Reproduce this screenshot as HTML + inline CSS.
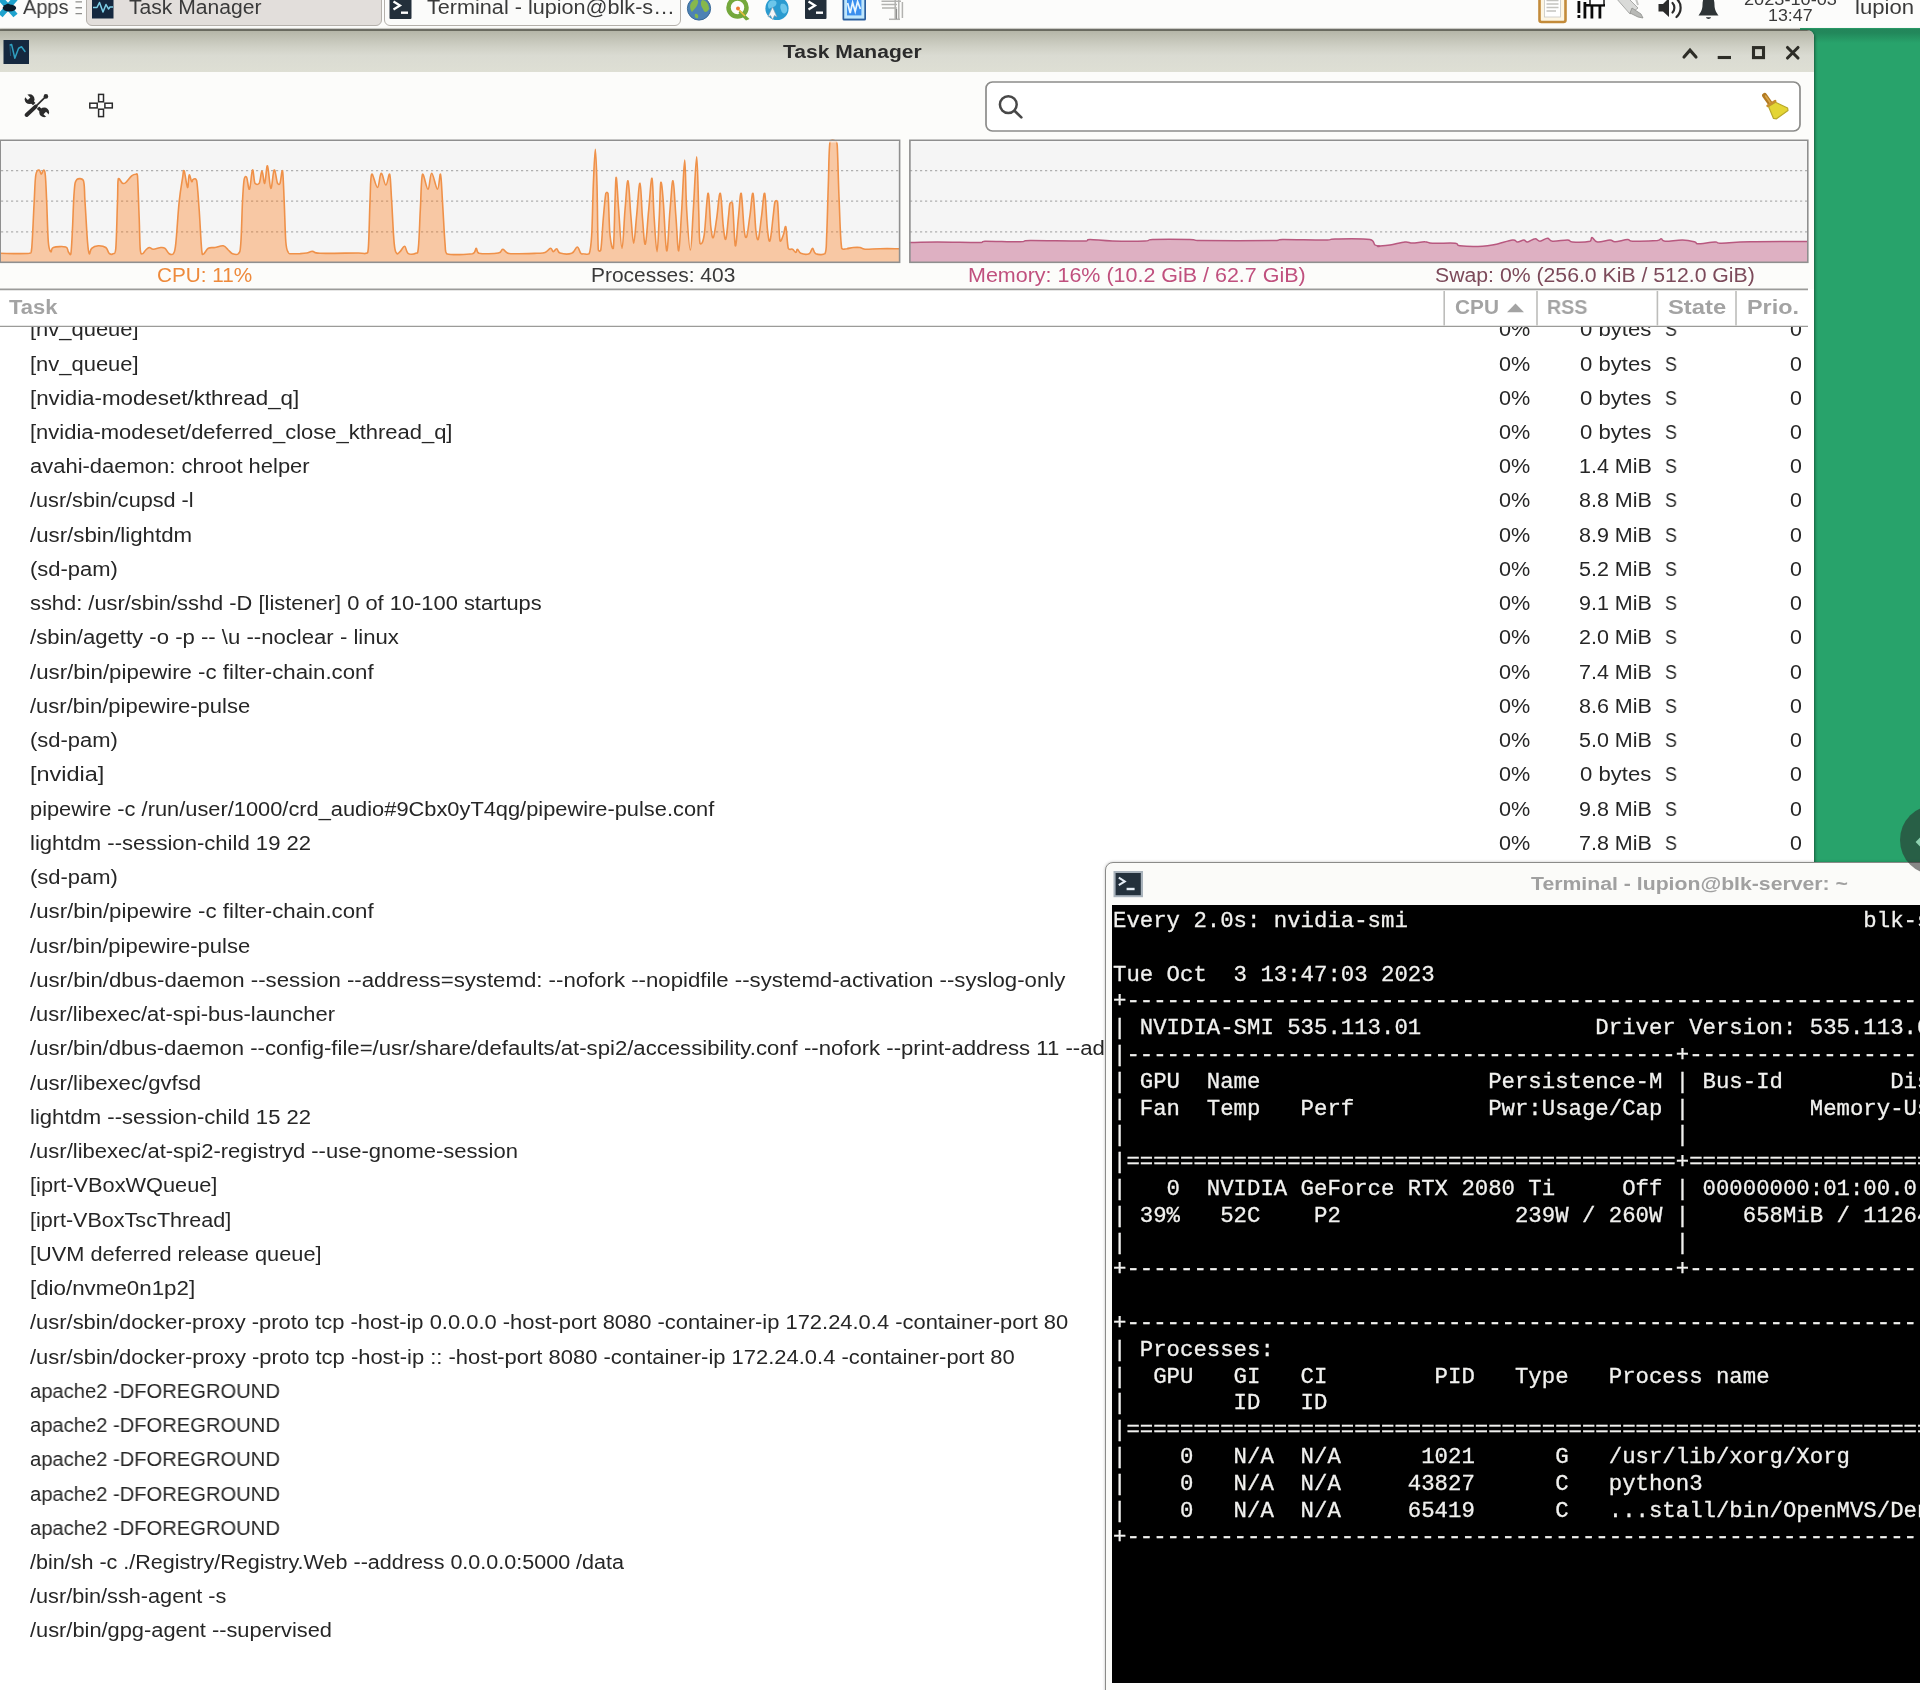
<!DOCTYPE html>
<html><head><meta charset="utf-8"><title>Task Manager</title>
<style>
html,body{margin:0;padding:0}
body{width:1920px;height:1690px;overflow:hidden;position:relative;background:#28a36b;font-family:"Liberation Sans",sans-serif;}
.abs{position:absolute}
.t{position:absolute;white-space:pre;will-change:transform;line-height:1.329em;transform-origin:0 0;font-family:"Liberation Sans",sans-serif}
#panel{left:0;top:0;width:1920px;height:30px;background:linear-gradient(#fcfcfb 0,#fcfcfb 27.4px,#c9c9c3 28.6px,#6b6b63 29.6px,#5e5e57 30px);overflow:hidden}
.tb{position:absolute;top:-6px;height:32px;border:1px solid #b4b0ab;border-radius:0 0 6px 6px;box-sizing:border-box}
#win{left:0;top:30px;width:1814px;height:1660px;background:#fff;overflow:hidden;border-radius:0 7px 0 0;box-shadow:1px 1px 3px rgba(0,0,0,.45)}
#titlebar{left:0;top:0;width:1814px;height:42px;background:linear-gradient(#b5b6a8 0,#bfc0b3 14%,#cfd0c5 38%,#dadbd2 60%,#dedfd4 100%);border-top:1.5px solid #696a5f;box-sizing:border-box}
#toolbar{left:0;top:42px;width:1814px;height:217px;background:#fcfcfa}
#search{left:985px;top:81px;width:816px;height:51px}
.graph{position:absolute;top:140px;height:122.5px;box-sizing:border-box;background:#f5f5f5}
#hdr{left:0;top:289px;width:1808px;height:38px;background:#fff}
.cs{position:absolute;top:291px;width:1.5px;height:34px;background:#c6c6c4}
#list{left:0;top:327px;width:1808px;height:1363px;overflow:hidden;background:#fff}
#term{left:1105px;top:862px;width:1170px;height:840px;background:#fbfbf9;border:1.6px solid #8b8b89;border-radius:8px 8px 0 0;box-sizing:border-box;overflow:hidden;box-shadow:0 0 3px rgba(0,0,0,.25)}
#tscreen{left:1112px;top:905px;width:900px;height:778px;background:#000;overflow:hidden}
#tscreen pre{will-change:transform;position:absolute;left:1px;top:3px;margin:0;font-family:"Liberation Mono",monospace;font-size:22.33px;line-height:26.8px;color:#f1f1ef;letter-spacing:0;-webkit-text-stroke:0.3px #f1f1ef}
</style></head><body>

<!-- ===== top panel ===== -->
<div id="panel" class="abs">
  <div class="tb" style="left:86px;width:296px;background:#e2dedb"></div>
  <div class="tb" style="left:384px;width:297px;background:#fbfbfa"></div>
  <svg class="abs" style="left:0;top:0" width="1920" height="30" viewBox="0 0 1920 30">
  <!-- xfce apps icon (blue X with dark mouse) -->
  <g>
    <path d="M0.5,-1.5 L15.5,15.5 M15.5,-1.5 L0.5,15.5" stroke="#1fa2cd" stroke-width="5.6" fill="none"/>
    <ellipse cx="9.4" cy="8" rx="6.8" ry="3.5" fill="#0c1b2b"/>
    <path d="M3,6 L8,3.5 L12,6 Z" fill="#0c1b2b"/>
  </g>
  <!-- handle -->
  <path d="M75.5,1.9H82M75.5,7.7H82M75.5,13.6H82" stroke="#8e8e8c" stroke-width="1.4"/>
  <!-- task manager icon in button -->
  <rect x="92" y="-5" width="21.5" height="23.5" fill="#15283f"/>
  <path d="M93,7.5 L97,7.5 L99.5,2.5 L103,12 L106,4.5 L108.5,9 L110,7 L113,7" fill="none" stroke="#7fd0e8" stroke-width="1.5" stroke-linejoin="round"/>
  <!-- terminal icon in button -->
  <rect x="389.5" y="-5" width="22" height="24" rx="1" fill="#232f3b"/>
  <path d="M393.5,1.5 L400,5.5 L393.5,9.5" fill="none" stroke="#fff" stroke-width="2.2"/>
  <rect x="401" y="11.5" width="7" height="2.4" fill="#fff"/>
  <!-- earth globe -->
  <circle cx="699" cy="8.5" r="11.6" fill="#4d82b4"/>
  <path d="M692,2 C695,-2 699,-1 698,3 C697,7 694,9 692,12 C690,10 689,5 692,2 Z M702,0 C706,0 709,4 709,9 C707,13 704,13 703,9 C701,6 700,3 702,0 Z M695,14 C697,13 699,15 698,18 C696,19 694,17 695,14 Z" fill="#86b84c"/>
  <circle cx="699" cy="8.5" r="11.6" fill="none" stroke="#3a6a98" stroke-width="1"/>
  <!-- qgis -->
  <circle cx="737.5" cy="7.5" r="9" fill="none" stroke="#74a83c" stroke-width="4.5"/>
  <path d="M740,10 L749.5,19 L746,20.5 L738.5,13 Z" fill="#74a83c"/>
  <circle cx="738" cy="8.5" r="2" fill="#ee7a30"/>
  <path d="M739,10 L745,16" stroke="#f0c040" stroke-width="1.5"/>
  <!-- globe blue with cursor -->
  <circle cx="777" cy="8.5" r="11.6" fill="#2a9bd0"/>
  <path d="M770,1 C774,-1 778,1 776,5 C774,8 771,7 769,9 C767,6 768,3 770,1 Z M781,4 C785,3 788,6 787,11 C785,15 782,14 781,10 C780,8 780,6 781,4 Z" fill="#6cc6ea"/>
  <path d="M772.5,7 L777,17 L774.5,15.5 L772.5,19.5 L770.5,15.5 L768,17 Z" fill="#f4f6f8" stroke="#8aa0b0" stroke-width=".6"/>
  <!-- terminal launcher -->
  <rect x="805" y="-5" width="21.5" height="24" rx="1" fill="#232f3b"/>
  <path d="M808.5,1.5 L815,5.5 L808.5,9.5" fill="none" stroke="#fff" stroke-width="2.2"/>
  <rect x="816" y="11.5" width="7" height="2.4" fill="#fff"/>
  <!-- blue monitor -->
  <rect x="842.5" y="-5" width="23.5" height="25.4" rx="1.5" fill="#2b5f9e"/>
  <rect x="844.2" y="-4" width="20.1" height="22.6" fill="#bfe6fc"/>
  <rect x="847" y="-2" width="14.4" height="17.4" fill="#3b8fee"/>
  <path d="M847.6,3 L850.2,13 L852.6,2.5 L855.2,11.5 L857.6,1.5 L860.4,9" fill="none" stroke="#e8f6ff" stroke-width="1.7"/>
  <!-- grey chip thing -->
  <g stroke="#b2b2b0" stroke-width="1.5" fill="none">
    <path d="M881.5,1.2H901M881.5,4.6H897M882,8H897"/>
    <path d="M895.2,-2V19.6M898.8,-3V20M902.4,2V18"/>
    <path d="M889,19.3H900"/>
  </g>
  <path d="M896.5,9V19" stroke="#8e8e8c" stroke-width="1.2"/>
  <!-- clipboard -->
  <rect x="1539.5" y="-8" width="26" height="30" rx="2" fill="#fdf6e4" stroke="#c38b3a" stroke-width="2.6"/>
  <rect x="1544.5" y="-4" width="16" height="21" fill="#fff" stroke="#c8c8c4" stroke-width=".8"/>
  <path d="M1546.5,0.5H1558.5M1546.5,4H1558.5M1546.5,7.5H1558.5M1546.5,11H1556" stroke="#c4c4c0" stroke-width="1.3"/>
  <!-- !|pi thing -->
  <g fill="#0a0a0a">
    <rect x="1577.5" y="1" width="2.8" height="12"/><rect x="1577.5" y="15" width="2.8" height="3"/>
    <rect x="1583.5" y="2" width="2.8" height="16.5"/>
    <rect x="1590.5" y="5" width="2.8" height="13.5"/><rect x="1598.5" y="5" width="2.8" height="13.5"/>
    <rect x="1586" y="4" width="19" height="2.6"/>
  </g>
  <rect x="1590" y="-6" width="14" height="11" fill="#fff" stroke="#0a0a0a" stroke-width="1.4"/>
  <!-- network plug -->
  <g>
    <path d="M1616,-2 L1626,-4 L1638,8 L1630,14 Z" fill="#d9dad8" stroke="#a9aaa8" stroke-width="1"/>
    <path d="M1632,8 L1641,14 L1643,18 L1638,17 L1630,13 Z" fill="#b8b9b6" stroke="#8e8f8c" stroke-width=".8"/>
    <path d="M1628,-3 L1636,-1 L1638,5" fill="none" stroke="#c4c5c2" stroke-width="2"/>
  </g>
  <!-- speaker -->
  <path d="M1658.5,4 L1663,4 L1669,-2 L1669,17 L1663,11.5 L1658.5,11.5 Z" fill="#2b2b2b"/>
  <path d="M1672.5,3 C1675,5.5 1675,10 1672.5,12.5" fill="none" stroke="#2b2b2b" stroke-width="2.2" stroke-linecap="round"/>
  <path d="M1676.5,-1.5 C1682,3.5 1682,12 1676.5,17" fill="none" stroke="#2b2b2b" stroke-width="2.2" stroke-linecap="round"/>
  <!-- bell -->
  <path d="M1708.5,-6 C1704,-5 1702.5,0 1702.5,5 C1702.5,10 1700.5,12.5 1698.5,15.5 L1718.5,15.5 C1716.5,12.5 1714.5,10 1714.5,5 C1714.5,0 1713,-5 1708.5,-6 Z" fill="#2e3436"/>
  <path d="M1706,17.3 L1711,17.3 C1710.5,19.4 1706.5,19.4 1706,17.3 Z" fill="#2e3436"/>
</svg>

</div>

<div class="abs" style="left:1800px;top:28.3px;width:120px;height:15px;background:linear-gradient(#28a36b 0,#23865a 1.2px,#22885b 5px,#28a36b 15px)"></div>
<!-- ===== task manager window ===== -->
<div id="win" class="abs">
  <div id="titlebar" class="abs"></div>
  <div id="toolbar" class="abs"></div>
</div>
<svg id="search" class="abs" width="816" height="51" viewBox="985 81 816 51"><rect x="986" y="82" width="814" height="49" rx="6.5" fill="#fff" stroke="#8c8c8a" stroke-width="1.7"/></svg>
<div class="graph" style="left:0;width:900px"></div>
<div class="graph" style="left:909px;width:899px"></div>
<svg class="abs" style="left:0;top:0" width="1920" height="300" viewBox="0 0 1920 300">
  <g stroke="#b0b0b0" stroke-width="1.3" stroke-dasharray="2.2 2.8" fill="none">
    <path d="M1,170.6H899M1,201.2H899M1,231.9H899"/>
    <path d="M910,170.6H1807M910,201.2H1807M910,231.9H1807"/>
  </g>
  <path d="M0.0,253.3 C5.3,253.3 23.4,254.2 29.2,253.3 C31.7,252.4 30.8,254.8 31.7,248.3 C32.6,238.9 33.4,215.1 34.2,201.7 C34.9,188.2 34.9,180.8 35.8,175.0 C36.8,169.2 38.2,170.2 39.2,170.0 C40.2,169.8 40.5,174.2 41.3,174.2 C42.2,174.2 42.9,169.8 43.7,170.0 C44.4,170.2 44.8,169.2 45.3,175.0 C45.9,180.8 46.1,189.4 46.7,201.7 C47.2,213.9 47.6,232.5 48.3,241.7 C49.1,250.8 49.9,250.6 50.8,251.7 C51.8,252.7 50.8,248.4 53.3,247.5 C56.1,246.6 63.1,246.2 65.8,247.0 C68.3,247.8 67.4,250.4 68.3,251.7 C69.2,253.0 70.1,255.7 70.8,254.2 C71.6,249.9 71.9,239.8 72.5,228.3 C73.1,216.9 73.4,200.6 74.2,191.7 C74.9,182.7 75.0,181.7 76.7,179.7 C78.3,178.2 81.8,178.2 83.3,180.3 C84.9,184.4 84.2,190.4 85.0,201.7 C85.8,212.9 86.7,232.1 87.5,241.7 C88.3,251.2 88.4,252.4 89.2,253.7 C89.9,254.9 90.0,249.8 91.7,248.3 C93.3,246.9 95.7,246.0 98.3,245.8 C100.9,245.7 103.8,246.1 105.8,247.5 C107.8,248.9 107.8,252.2 109.2,253.3 C110.5,254.5 112.1,254.6 113.3,253.7 C114.6,252.8 115.1,255.2 115.8,248.3 C116.6,238.8 117.0,214.4 117.5,201.7 C118.0,188.9 117.5,182.0 118.3,178.7 C119.2,177.2 121.1,182.6 122.5,183.3 C123.9,184.0 124.2,183.9 125.8,182.5 C127.5,181.1 129.8,177.4 131.7,175.8 C133.5,174.3 134.8,174.2 135.8,174.2 C136.9,174.2 136.9,172.7 137.5,175.8 C138.1,183.9 138.6,204.7 139.2,218.3 C139.7,231.9 139.7,243.5 140.3,250.0 C140.9,255.2 141.5,253.7 142.5,253.7 C143.5,253.7 144.6,251.1 145.8,250.0 C147.1,248.9 147.8,247.7 149.2,247.5 C150.5,247.3 151.2,249.2 153.3,249.2 C155.5,249.2 158.7,247.7 160.8,247.5 C163.0,247.3 163.5,247.2 165.0,248.3 C166.5,249.5 167.6,252.7 169.2,253.7 C170.7,254.6 172.1,255.2 173.3,253.7 C174.6,251.8 174.8,252.9 175.8,243.3 C176.9,233.8 177.9,213.6 179.2,201.7 C180.4,189.8 181.6,184.0 182.5,178.3 C183.4,172.7 183.2,169.3 184.2,170.8 C185.1,172.5 186.6,186.7 187.5,187.5 C188.4,188.3 188.4,176.1 189.2,175.0 C189.9,173.9 190.9,180.9 191.7,181.7 C192.4,182.4 192.4,179.3 193.3,179.2 C194.2,179.0 195.6,177.7 196.7,180.8 C197.7,186.5 198.2,197.3 199.2,210.0 C200.1,222.7 200.9,241.9 201.7,250.0 C202.4,255.7 202.1,254.5 203.3,254.2 C204.6,253.9 206.2,249.6 208.3,248.3 C210.5,247.1 212.2,248.0 215.0,247.5 C217.8,247.0 220.9,245.4 223.3,245.8 C225.8,246.3 226.7,248.6 228.3,250.0 C230.0,251.4 230.7,253.0 232.5,253.7 C234.3,254.3 236.8,255.2 238.3,253.7 C239.9,251.8 240.1,252.9 240.8,243.3 C241.6,233.8 241.9,213.4 242.5,201.7 C243.1,189.9 243.4,183.6 244.2,179.2 C244.9,176.0 245.7,176.0 246.7,177.5 C247.6,179.3 248.4,190.5 249.5,189.2 C250.6,187.8 251.5,171.1 252.5,170.0 C253.5,168.9 253.8,180.9 255.0,183.3 C256.2,184.8 257.9,184.8 259.2,183.3 C260.5,181.0 261.0,170.8 262.0,170.8 C263.0,170.8 263.7,184.2 264.7,183.3 C265.7,182.4 266.4,164.9 267.5,165.8 C268.6,166.8 269.6,187.6 270.8,188.3 C272.1,189.1 272.9,170.9 274.2,170.0 C275.4,169.1 276.4,180.9 277.5,183.3 C278.6,184.8 279.1,184.8 280.0,183.3 C280.9,181.0 281.7,169.3 282.5,170.8 C283.3,174.2 283.6,188.7 284.2,201.7 C284.8,214.7 285.1,232.3 285.8,241.7 C286.6,251.0 287.3,250.3 288.3,252.5 C289.4,254.7 289.5,253.5 291.7,253.7 C293.8,253.9 297.2,253.8 300.0,253.7 C302.8,253.5 304.4,253.4 306.7,253.0 C309.0,252.6 310.1,251.3 312.5,251.3 C314.9,251.4 312.5,253.0 320.0,253.3 C328.4,253.6 349.9,253.0 358.3,253.0 C365.8,253.0 364.0,254.2 365.8,253.3 C367.7,252.5 367.6,254.8 368.3,248.3 C369.1,238.9 369.4,215.3 370.0,201.7 C370.6,188.1 370.3,176.8 371.7,174.2 C373.0,172.7 375.8,187.7 377.5,187.5 C379.2,187.3 379.6,173.8 381.2,173.3 C382.7,172.9 384.3,184.8 385.8,185.0 C387.4,185.2 388.6,172.7 389.7,174.2 C390.7,177.2 390.8,189.0 391.7,201.7 C392.5,214.3 393.2,233.9 394.2,243.3 C395.1,252.8 395.6,251.8 396.7,253.3 C397.7,254.8 398.5,253.0 400.0,251.7 C401.5,250.4 403.2,246.0 404.7,246.3 C406.1,246.6 406.0,252.0 408.0,253.3 C410.0,254.6 413.9,254.2 415.8,253.3 C417.7,252.4 417.5,254.8 418.3,248.3 C419.2,240.4 419.6,223.6 420.3,210.0 C421.1,196.4 421.1,178.0 422.5,174.2 C423.9,172.7 426.3,189.3 428.0,189.2 C429.7,189.0 429.9,173.3 431.7,173.3 C433.4,173.3 435.9,189.0 437.5,189.2 C439.1,189.3 439.6,172.7 440.5,174.2 C441.4,176.5 441.7,189.0 442.5,201.7 C443.3,214.3 444.2,233.8 445.0,243.3 C445.8,252.9 445.0,251.8 446.7,253.7 C451.7,255.2 467.1,254.6 472.5,253.7 C476.2,252.7 474.9,248.4 476.2,248.3 C477.4,248.3 476.2,252.5 479.2,253.3 C483.2,254.2 494.1,253.8 498.3,253.0 C502.5,252.2 501.1,249.4 502.5,249.2 C503.9,248.9 504.3,250.8 505.8,251.7 C507.4,252.5 505.8,253.4 510.8,253.7 C516.5,254.0 530.4,253.5 536.7,253.3 C542.9,253.1 542.5,253.4 545.0,252.5 C547.5,251.6 549.0,248.5 550.5,248.3 C552.0,248.2 552.2,251.6 553.3,251.7 C554.5,251.7 555.4,248.4 556.7,248.7 C557.9,248.9 557.2,252.1 560.0,253.0 C562.8,253.9 568.5,254.4 571.7,253.3 C574.8,252.2 575.5,247.0 577.2,247.0 C578.8,247.0 579.7,252.1 580.8,253.3 C582.0,254.6 581.8,253.6 583.3,253.7 C584.9,253.7 587.6,255.2 589.2,253.7 C590.7,250.2 590.9,247.6 591.7,235.0 C592.4,222.4 592.7,200.7 593.3,185.0 C594.0,169.3 594.7,149.2 595.3,149.2 C596.0,149.2 596.5,166.5 597.0,185.0 C597.5,203.5 597.6,238.1 598.3,250.0 C599.0,251.5 599.9,251.5 600.8,250.0 C601.8,244.2 602.4,228.7 603.3,218.3 C604.2,207.9 605.0,197.9 605.8,193.3 C606.7,191.8 607.2,191.8 608.0,193.3 C608.8,201.0 609.0,224.9 610.0,235.0 C611.0,245.1 612.4,249.8 613.3,248.3 C614.2,242.2 614.5,214.7 615.0,201.7 C615.5,188.7 615.7,176.0 616.3,177.5 C617.0,179.0 617.6,197.0 618.7,210.0 C619.7,223.0 620.8,248.3 622.0,248.3 C623.2,248.3 623.9,222.4 625.0,210.0 C626.1,197.6 626.9,179.9 628.0,180.8 C629.1,181.8 629.8,203.5 630.8,215.0 C631.9,226.5 632.6,243.3 633.7,243.3 C634.7,243.3 635.5,226.0 636.7,215.0 C637.8,204.0 638.9,182.7 640.0,183.3 C641.1,183.9 641.5,207.2 642.5,218.3 C643.5,229.5 644.2,245.7 645.3,244.2 C646.5,242.6 647.4,222.1 648.7,210.0 C649.9,197.9 651.0,176.8 652.0,178.3 C653.0,179.9 653.2,204.9 654.2,218.3 C655.1,231.8 656.1,251.7 657.0,251.7 C657.9,251.7 658.5,231.0 659.2,218.3 C659.9,205.7 660.1,185.6 660.8,182.5 C661.6,181.0 662.3,189.1 663.3,201.7 C664.4,214.2 665.4,249.3 666.7,250.8 C667.9,252.3 668.8,222.8 670.0,210.0 C671.2,197.2 671.9,179.9 673.0,180.8 C674.1,181.8 674.8,202.2 675.8,215.0 C676.9,227.8 677.6,251.7 678.7,250.8 C679.7,249.9 680.6,226.7 681.7,210.0 C682.8,193.3 683.8,160.0 684.7,160.0 C685.6,160.0 685.6,193.5 686.7,210.0 C687.7,226.5 689.1,250.0 690.3,250.0 C691.6,250.0 692.2,227.1 693.3,210.0 C694.5,192.9 695.7,156.7 696.7,156.7 C697.6,156.7 698.1,194.1 698.7,210.0 C699.3,225.9 699.0,238.7 700.0,243.3 C701.0,244.8 702.7,244.2 704.2,235.0 C705.6,225.8 706.8,194.9 708.0,193.3 C709.2,191.8 709.9,218.6 710.8,226.7 C711.8,234.8 712.3,239.0 713.3,237.5 C714.4,236.0 715.4,226.4 716.7,218.3 C717.9,210.2 719.1,191.8 720.3,193.3 C721.6,194.9 722.3,218.3 723.3,226.7 C724.3,235.1 724.9,240.7 725.8,239.2 C726.8,237.6 727.6,224.9 728.3,218.3 C729.1,211.8 729.2,206.1 730.0,203.3 C730.8,201.8 731.5,201.8 732.5,203.3 C733.5,211.1 734.3,243.1 735.3,245.8 C736.4,247.3 737.3,228.0 738.3,218.3 C739.4,208.7 740.1,191.8 741.2,193.3 C742.2,195.5 743.2,222.1 744.2,230.0 C745.2,237.9 745.6,238.2 746.7,236.7 C747.7,233.9 748.8,222.9 750.0,215.0 C751.2,207.1 751.9,191.8 753.0,193.3 C754.1,196.1 754.9,221.6 755.8,230.0 C756.8,238.4 757.3,240.7 758.3,239.2 C759.4,236.4 760.5,223.4 761.7,215.0 C762.8,206.6 763.6,191.8 764.7,193.3 C765.7,196.1 766.5,221.3 767.5,230.0 C768.5,238.7 768.9,242.3 770.0,240.8 C771.1,238.1 772.4,222.2 773.3,215.0 C774.2,207.8 774.2,204.1 775.0,201.7 C775.8,200.2 776.6,200.2 777.5,201.7 C778.4,208.8 778.9,234.7 780.0,240.8 C781.1,242.3 782.3,237.6 783.3,235.0 C784.4,232.4 784.9,225.2 785.8,226.7 C786.8,229.1 787.1,244.2 788.3,248.3 C789.6,250.7 791.1,248.4 792.5,249.2 C793.9,249.9 794.9,252.5 795.8,252.5 C796.8,252.5 796.6,249.0 797.5,249.2 C798.4,249.3 798.7,252.5 800.8,253.3 C803.0,254.2 807.0,254.6 809.2,253.7 C811.3,252.8 811.3,248.3 812.5,248.3 C813.7,248.3 813.5,252.7 815.8,253.7 C818.1,254.6 823.0,255.2 825.0,253.7 C826.7,250.2 826.1,247.6 826.7,235.0 C827.3,222.4 827.7,202.1 828.3,185.0 C828.9,167.9 828.8,149.8 830.0,141.7 C831.2,139.3 833.7,140.2 835.0,140.8 C836.3,141.4 836.4,139.3 837.2,145.0 C837.9,156.2 838.3,182.7 839.2,201.7 C840.0,220.6 840.3,239.7 841.7,248.3 C843.0,250.2 844.5,248.8 846.7,248.7 C848.8,248.5 850.9,247.7 853.3,247.5 C855.8,247.3 857.9,247.2 860.0,247.5 C862.1,247.8 861.3,249.0 865.0,249.2 C868.7,249.4 873.7,248.8 880.0,248.7 C886.3,248.6 895.7,248.7 899.2,248.7 L899.2,262 L0.0,262 Z" fill="rgba(255,110,0,0.33)" stroke="none"/>
  <path d="M0.0,253.3 C5.3,253.3 23.4,254.2 29.2,253.3 C31.7,252.4 30.8,254.8 31.7,248.3 C32.6,238.9 33.4,215.1 34.2,201.7 C34.9,188.2 34.9,180.8 35.8,175.0 C36.8,169.2 38.2,170.2 39.2,170.0 C40.2,169.8 40.5,174.2 41.3,174.2 C42.2,174.2 42.9,169.8 43.7,170.0 C44.4,170.2 44.8,169.2 45.3,175.0 C45.9,180.8 46.1,189.4 46.7,201.7 C47.2,213.9 47.6,232.5 48.3,241.7 C49.1,250.8 49.9,250.6 50.8,251.7 C51.8,252.7 50.8,248.4 53.3,247.5 C56.1,246.6 63.1,246.2 65.8,247.0 C68.3,247.8 67.4,250.4 68.3,251.7 C69.2,253.0 70.1,255.7 70.8,254.2 C71.6,249.9 71.9,239.8 72.5,228.3 C73.1,216.9 73.4,200.6 74.2,191.7 C74.9,182.7 75.0,181.7 76.7,179.7 C78.3,178.2 81.8,178.2 83.3,180.3 C84.9,184.4 84.2,190.4 85.0,201.7 C85.8,212.9 86.7,232.1 87.5,241.7 C88.3,251.2 88.4,252.4 89.2,253.7 C89.9,254.9 90.0,249.8 91.7,248.3 C93.3,246.9 95.7,246.0 98.3,245.8 C100.9,245.7 103.8,246.1 105.8,247.5 C107.8,248.9 107.8,252.2 109.2,253.3 C110.5,254.5 112.1,254.6 113.3,253.7 C114.6,252.8 115.1,255.2 115.8,248.3 C116.6,238.8 117.0,214.4 117.5,201.7 C118.0,188.9 117.5,182.0 118.3,178.7 C119.2,177.2 121.1,182.6 122.5,183.3 C123.9,184.0 124.2,183.9 125.8,182.5 C127.5,181.1 129.8,177.4 131.7,175.8 C133.5,174.3 134.8,174.2 135.8,174.2 C136.9,174.2 136.9,172.7 137.5,175.8 C138.1,183.9 138.6,204.7 139.2,218.3 C139.7,231.9 139.7,243.5 140.3,250.0 C140.9,255.2 141.5,253.7 142.5,253.7 C143.5,253.7 144.6,251.1 145.8,250.0 C147.1,248.9 147.8,247.7 149.2,247.5 C150.5,247.3 151.2,249.2 153.3,249.2 C155.5,249.2 158.7,247.7 160.8,247.5 C163.0,247.3 163.5,247.2 165.0,248.3 C166.5,249.5 167.6,252.7 169.2,253.7 C170.7,254.6 172.1,255.2 173.3,253.7 C174.6,251.8 174.8,252.9 175.8,243.3 C176.9,233.8 177.9,213.6 179.2,201.7 C180.4,189.8 181.6,184.0 182.5,178.3 C183.4,172.7 183.2,169.3 184.2,170.8 C185.1,172.5 186.6,186.7 187.5,187.5 C188.4,188.3 188.4,176.1 189.2,175.0 C189.9,173.9 190.9,180.9 191.7,181.7 C192.4,182.4 192.4,179.3 193.3,179.2 C194.2,179.0 195.6,177.7 196.7,180.8 C197.7,186.5 198.2,197.3 199.2,210.0 C200.1,222.7 200.9,241.9 201.7,250.0 C202.4,255.7 202.1,254.5 203.3,254.2 C204.6,253.9 206.2,249.6 208.3,248.3 C210.5,247.1 212.2,248.0 215.0,247.5 C217.8,247.0 220.9,245.4 223.3,245.8 C225.8,246.3 226.7,248.6 228.3,250.0 C230.0,251.4 230.7,253.0 232.5,253.7 C234.3,254.3 236.8,255.2 238.3,253.7 C239.9,251.8 240.1,252.9 240.8,243.3 C241.6,233.8 241.9,213.4 242.5,201.7 C243.1,189.9 243.4,183.6 244.2,179.2 C244.9,176.0 245.7,176.0 246.7,177.5 C247.6,179.3 248.4,190.5 249.5,189.2 C250.6,187.8 251.5,171.1 252.5,170.0 C253.5,168.9 253.8,180.9 255.0,183.3 C256.2,184.8 257.9,184.8 259.2,183.3 C260.5,181.0 261.0,170.8 262.0,170.8 C263.0,170.8 263.7,184.2 264.7,183.3 C265.7,182.4 266.4,164.9 267.5,165.8 C268.6,166.8 269.6,187.6 270.8,188.3 C272.1,189.1 272.9,170.9 274.2,170.0 C275.4,169.1 276.4,180.9 277.5,183.3 C278.6,184.8 279.1,184.8 280.0,183.3 C280.9,181.0 281.7,169.3 282.5,170.8 C283.3,174.2 283.6,188.7 284.2,201.7 C284.8,214.7 285.1,232.3 285.8,241.7 C286.6,251.0 287.3,250.3 288.3,252.5 C289.4,254.7 289.5,253.5 291.7,253.7 C293.8,253.9 297.2,253.8 300.0,253.7 C302.8,253.5 304.4,253.4 306.7,253.0 C309.0,252.6 310.1,251.3 312.5,251.3 C314.9,251.4 312.5,253.0 320.0,253.3 C328.4,253.6 349.9,253.0 358.3,253.0 C365.8,253.0 364.0,254.2 365.8,253.3 C367.7,252.5 367.6,254.8 368.3,248.3 C369.1,238.9 369.4,215.3 370.0,201.7 C370.6,188.1 370.3,176.8 371.7,174.2 C373.0,172.7 375.8,187.7 377.5,187.5 C379.2,187.3 379.6,173.8 381.2,173.3 C382.7,172.9 384.3,184.8 385.8,185.0 C387.4,185.2 388.6,172.7 389.7,174.2 C390.7,177.2 390.8,189.0 391.7,201.7 C392.5,214.3 393.2,233.9 394.2,243.3 C395.1,252.8 395.6,251.8 396.7,253.3 C397.7,254.8 398.5,253.0 400.0,251.7 C401.5,250.4 403.2,246.0 404.7,246.3 C406.1,246.6 406.0,252.0 408.0,253.3 C410.0,254.6 413.9,254.2 415.8,253.3 C417.7,252.4 417.5,254.8 418.3,248.3 C419.2,240.4 419.6,223.6 420.3,210.0 C421.1,196.4 421.1,178.0 422.5,174.2 C423.9,172.7 426.3,189.3 428.0,189.2 C429.7,189.0 429.9,173.3 431.7,173.3 C433.4,173.3 435.9,189.0 437.5,189.2 C439.1,189.3 439.6,172.7 440.5,174.2 C441.4,176.5 441.7,189.0 442.5,201.7 C443.3,214.3 444.2,233.8 445.0,243.3 C445.8,252.9 445.0,251.8 446.7,253.7 C451.7,255.2 467.1,254.6 472.5,253.7 C476.2,252.7 474.9,248.4 476.2,248.3 C477.4,248.3 476.2,252.5 479.2,253.3 C483.2,254.2 494.1,253.8 498.3,253.0 C502.5,252.2 501.1,249.4 502.5,249.2 C503.9,248.9 504.3,250.8 505.8,251.7 C507.4,252.5 505.8,253.4 510.8,253.7 C516.5,254.0 530.4,253.5 536.7,253.3 C542.9,253.1 542.5,253.4 545.0,252.5 C547.5,251.6 549.0,248.5 550.5,248.3 C552.0,248.2 552.2,251.6 553.3,251.7 C554.5,251.7 555.4,248.4 556.7,248.7 C557.9,248.9 557.2,252.1 560.0,253.0 C562.8,253.9 568.5,254.4 571.7,253.3 C574.8,252.2 575.5,247.0 577.2,247.0 C578.8,247.0 579.7,252.1 580.8,253.3 C582.0,254.6 581.8,253.6 583.3,253.7 C584.9,253.7 587.6,255.2 589.2,253.7 C590.7,250.2 590.9,247.6 591.7,235.0 C592.4,222.4 592.7,200.7 593.3,185.0 C594.0,169.3 594.7,149.2 595.3,149.2 C596.0,149.2 596.5,166.5 597.0,185.0 C597.5,203.5 597.6,238.1 598.3,250.0 C599.0,251.5 599.9,251.5 600.8,250.0 C601.8,244.2 602.4,228.7 603.3,218.3 C604.2,207.9 605.0,197.9 605.8,193.3 C606.7,191.8 607.2,191.8 608.0,193.3 C608.8,201.0 609.0,224.9 610.0,235.0 C611.0,245.1 612.4,249.8 613.3,248.3 C614.2,242.2 614.5,214.7 615.0,201.7 C615.5,188.7 615.7,176.0 616.3,177.5 C617.0,179.0 617.6,197.0 618.7,210.0 C619.7,223.0 620.8,248.3 622.0,248.3 C623.2,248.3 623.9,222.4 625.0,210.0 C626.1,197.6 626.9,179.9 628.0,180.8 C629.1,181.8 629.8,203.5 630.8,215.0 C631.9,226.5 632.6,243.3 633.7,243.3 C634.7,243.3 635.5,226.0 636.7,215.0 C637.8,204.0 638.9,182.7 640.0,183.3 C641.1,183.9 641.5,207.2 642.5,218.3 C643.5,229.5 644.2,245.7 645.3,244.2 C646.5,242.6 647.4,222.1 648.7,210.0 C649.9,197.9 651.0,176.8 652.0,178.3 C653.0,179.9 653.2,204.9 654.2,218.3 C655.1,231.8 656.1,251.7 657.0,251.7 C657.9,251.7 658.5,231.0 659.2,218.3 C659.9,205.7 660.1,185.6 660.8,182.5 C661.6,181.0 662.3,189.1 663.3,201.7 C664.4,214.2 665.4,249.3 666.7,250.8 C667.9,252.3 668.8,222.8 670.0,210.0 C671.2,197.2 671.9,179.9 673.0,180.8 C674.1,181.8 674.8,202.2 675.8,215.0 C676.9,227.8 677.6,251.7 678.7,250.8 C679.7,249.9 680.6,226.7 681.7,210.0 C682.8,193.3 683.8,160.0 684.7,160.0 C685.6,160.0 685.6,193.5 686.7,210.0 C687.7,226.5 689.1,250.0 690.3,250.0 C691.6,250.0 692.2,227.1 693.3,210.0 C694.5,192.9 695.7,156.7 696.7,156.7 C697.6,156.7 698.1,194.1 698.7,210.0 C699.3,225.9 699.0,238.7 700.0,243.3 C701.0,244.8 702.7,244.2 704.2,235.0 C705.6,225.8 706.8,194.9 708.0,193.3 C709.2,191.8 709.9,218.6 710.8,226.7 C711.8,234.8 712.3,239.0 713.3,237.5 C714.4,236.0 715.4,226.4 716.7,218.3 C717.9,210.2 719.1,191.8 720.3,193.3 C721.6,194.9 722.3,218.3 723.3,226.7 C724.3,235.1 724.9,240.7 725.8,239.2 C726.8,237.6 727.6,224.9 728.3,218.3 C729.1,211.8 729.2,206.1 730.0,203.3 C730.8,201.8 731.5,201.8 732.5,203.3 C733.5,211.1 734.3,243.1 735.3,245.8 C736.4,247.3 737.3,228.0 738.3,218.3 C739.4,208.7 740.1,191.8 741.2,193.3 C742.2,195.5 743.2,222.1 744.2,230.0 C745.2,237.9 745.6,238.2 746.7,236.7 C747.7,233.9 748.8,222.9 750.0,215.0 C751.2,207.1 751.9,191.8 753.0,193.3 C754.1,196.1 754.9,221.6 755.8,230.0 C756.8,238.4 757.3,240.7 758.3,239.2 C759.4,236.4 760.5,223.4 761.7,215.0 C762.8,206.6 763.6,191.8 764.7,193.3 C765.7,196.1 766.5,221.3 767.5,230.0 C768.5,238.7 768.9,242.3 770.0,240.8 C771.1,238.1 772.4,222.2 773.3,215.0 C774.2,207.8 774.2,204.1 775.0,201.7 C775.8,200.2 776.6,200.2 777.5,201.7 C778.4,208.8 778.9,234.7 780.0,240.8 C781.1,242.3 782.3,237.6 783.3,235.0 C784.4,232.4 784.9,225.2 785.8,226.7 C786.8,229.1 787.1,244.2 788.3,248.3 C789.6,250.7 791.1,248.4 792.5,249.2 C793.9,249.9 794.9,252.5 795.8,252.5 C796.8,252.5 796.6,249.0 797.5,249.2 C798.4,249.3 798.7,252.5 800.8,253.3 C803.0,254.2 807.0,254.6 809.2,253.7 C811.3,252.8 811.3,248.3 812.5,248.3 C813.7,248.3 813.5,252.7 815.8,253.7 C818.1,254.6 823.0,255.2 825.0,253.7 C826.7,250.2 826.1,247.6 826.7,235.0 C827.3,222.4 827.7,202.1 828.3,185.0 C828.9,167.9 828.8,149.8 830.0,141.7 C831.2,139.3 833.7,140.2 835.0,140.8 C836.3,141.4 836.4,139.3 837.2,145.0 C837.9,156.2 838.3,182.7 839.2,201.7 C840.0,220.6 840.3,239.7 841.7,248.3 C843.0,250.2 844.5,248.8 846.7,248.7 C848.8,248.5 850.9,247.7 853.3,247.5 C855.8,247.3 857.9,247.2 860.0,247.5 C862.1,247.8 861.3,249.0 865.0,249.2 C868.7,249.4 873.7,248.8 880.0,248.7 C886.3,248.6 895.7,248.7 899.2,248.7" fill="none" stroke="#ef9149" stroke-width="1.6" stroke-linejoin="round"/>
  <path d="M909.5,242.5 C914.6,242.4 924.6,242.0 937.5,242.0 C950.4,242.0 971.3,242.6 980.0,242.5 C985.0,242.4 980.0,241.4 985.0,241.2 C992.3,241.1 1011.8,241.9 1020.0,241.8 C1028.2,241.6 1020.0,240.6 1030.0,240.5 C1041.9,240.4 1074.0,241.2 1085.0,241.0 C1090.0,240.8 1085.0,239.5 1090.0,239.5 C1095.0,239.5 1102.4,240.7 1112.5,241.0 C1122.6,241.3 1137.7,241.3 1145.0,241.0 C1152.3,240.7 1145.0,239.8 1152.5,239.5 C1160.8,239.2 1181.3,239.3 1190.0,239.5 C1198.7,239.7 1190.0,240.3 1200.0,240.5 C1215.6,240.7 1259.9,240.7 1275.0,240.5 C1282.5,240.3 1275.0,239.6 1282.5,239.5 C1291.7,239.4 1315.4,240.1 1325.0,240.0 C1334.6,239.9 1326.8,239.1 1335.0,239.0 C1343.2,238.9 1362.7,238.4 1370.0,239.5 C1375.0,240.6 1373.2,243.8 1375.0,245.0 C1376.8,246.2 1379.5,246.0 1380.0,246.2 C1377.5,246.5 1377.5,246.5 1377.5,246.2 C1379.3,246.0 1385.0,245.8 1390.0,245.0 C1395.0,244.2 1400.9,242.4 1405.0,242.0 C1409.1,241.6 1408.8,243.0 1412.5,243.0 C1416.2,243.0 1421.3,241.7 1425.0,241.8 C1428.7,241.8 1427.0,243.0 1432.5,243.2 C1438.0,243.5 1450.0,242.8 1455.0,243.2 C1460.0,243.7 1455.0,245.2 1460.0,245.8 C1465.0,246.3 1476.1,246.5 1482.5,246.2 C1488.9,246.0 1489.5,245.6 1495.0,244.5 C1500.5,243.4 1508.4,240.5 1512.5,240.0 C1516.6,239.5 1515.4,242.0 1517.5,242.0 C1519.6,242.0 1521.9,240.0 1523.8,240.0 C1525.6,240.0 1525.4,242.2 1527.5,242.0 C1529.6,241.8 1532.7,238.9 1535.0,238.8 C1537.3,238.6 1537.7,241.3 1540.0,241.2 C1542.3,241.2 1545.2,238.2 1547.5,238.2 C1549.8,238.2 1548.8,240.9 1552.5,241.2 C1556.2,241.6 1563.8,239.9 1567.5,240.0 C1571.2,240.1 1568.4,241.8 1572.5,242.0 C1576.6,242.2 1586.4,242.1 1590.0,241.2 C1592.0,240.4 1590.6,237.4 1592.0,237.5 C1593.4,237.6 1594.2,241.5 1597.5,242.0 C1600.8,242.5 1606.8,240.0 1610.0,240.0 C1613.2,240.0 1611.8,241.8 1615.0,241.8 C1618.2,241.7 1624.3,239.6 1627.5,239.5 C1630.7,239.4 1627.5,241.1 1632.5,241.2 C1638.0,241.4 1652.2,241.0 1657.5,240.5 C1661.2,240.0 1659.9,238.6 1661.2,238.8 C1662.6,238.9 1661.2,241.0 1665.0,241.2 C1668.9,241.5 1677.0,239.9 1682.5,240.0 C1688.0,240.1 1692.2,241.3 1695.0,242.0 C1697.5,242.7 1695.0,243.8 1697.5,243.8 C1701.2,243.8 1710.9,242.1 1715.0,242.0 C1719.1,241.9 1715.0,243.3 1720.0,243.2 C1726.4,243.2 1733.9,242.1 1750.0,241.8 C1766.1,241.4 1797.4,241.5 1808.0,241.5 L1808.0,262 L909.5,262 Z" fill="rgba(171,24,82,0.31)" stroke="none"/>
  <path d="M909.5,242.5 C914.6,242.4 924.6,242.0 937.5,242.0 C950.4,242.0 971.3,242.6 980.0,242.5 C985.0,242.4 980.0,241.4 985.0,241.2 C992.3,241.1 1011.8,241.9 1020.0,241.8 C1028.2,241.6 1020.0,240.6 1030.0,240.5 C1041.9,240.4 1074.0,241.2 1085.0,241.0 C1090.0,240.8 1085.0,239.5 1090.0,239.5 C1095.0,239.5 1102.4,240.7 1112.5,241.0 C1122.6,241.3 1137.7,241.3 1145.0,241.0 C1152.3,240.7 1145.0,239.8 1152.5,239.5 C1160.8,239.2 1181.3,239.3 1190.0,239.5 C1198.7,239.7 1190.0,240.3 1200.0,240.5 C1215.6,240.7 1259.9,240.7 1275.0,240.5 C1282.5,240.3 1275.0,239.6 1282.5,239.5 C1291.7,239.4 1315.4,240.1 1325.0,240.0 C1334.6,239.9 1326.8,239.1 1335.0,239.0 C1343.2,238.9 1362.7,238.4 1370.0,239.5 C1375.0,240.6 1373.2,243.8 1375.0,245.0 C1376.8,246.2 1379.5,246.0 1380.0,246.2 C1377.5,246.5 1377.5,246.5 1377.5,246.2 C1379.3,246.0 1385.0,245.8 1390.0,245.0 C1395.0,244.2 1400.9,242.4 1405.0,242.0 C1409.1,241.6 1408.8,243.0 1412.5,243.0 C1416.2,243.0 1421.3,241.7 1425.0,241.8 C1428.7,241.8 1427.0,243.0 1432.5,243.2 C1438.0,243.5 1450.0,242.8 1455.0,243.2 C1460.0,243.7 1455.0,245.2 1460.0,245.8 C1465.0,246.3 1476.1,246.5 1482.5,246.2 C1488.9,246.0 1489.5,245.6 1495.0,244.5 C1500.5,243.4 1508.4,240.5 1512.5,240.0 C1516.6,239.5 1515.4,242.0 1517.5,242.0 C1519.6,242.0 1521.9,240.0 1523.8,240.0 C1525.6,240.0 1525.4,242.2 1527.5,242.0 C1529.6,241.8 1532.7,238.9 1535.0,238.8 C1537.3,238.6 1537.7,241.3 1540.0,241.2 C1542.3,241.2 1545.2,238.2 1547.5,238.2 C1549.8,238.2 1548.8,240.9 1552.5,241.2 C1556.2,241.6 1563.8,239.9 1567.5,240.0 C1571.2,240.1 1568.4,241.8 1572.5,242.0 C1576.6,242.2 1586.4,242.1 1590.0,241.2 C1592.0,240.4 1590.6,237.4 1592.0,237.5 C1593.4,237.6 1594.2,241.5 1597.5,242.0 C1600.8,242.5 1606.8,240.0 1610.0,240.0 C1613.2,240.0 1611.8,241.8 1615.0,241.8 C1618.2,241.7 1624.3,239.6 1627.5,239.5 C1630.7,239.4 1627.5,241.1 1632.5,241.2 C1638.0,241.4 1652.2,241.0 1657.5,240.5 C1661.2,240.0 1659.9,238.6 1661.2,238.8 C1662.6,238.9 1661.2,241.0 1665.0,241.2 C1668.9,241.5 1677.0,239.9 1682.5,240.0 C1688.0,240.1 1692.2,241.3 1695.0,242.0 C1697.5,242.7 1695.0,243.8 1697.5,243.8 C1701.2,243.8 1710.9,242.1 1715.0,242.0 C1719.1,241.9 1715.0,243.3 1720.0,243.2 C1726.4,243.2 1733.9,242.1 1750.0,241.8 C1766.1,241.4 1797.4,241.5 1808.0,241.5" fill="none" stroke="#b8587f" stroke-width="1.5" stroke-linejoin="round"/>
  <g fill="none" stroke="#8f8f8f" stroke-width="1.6"><rect x="0.2" y="140.3" width="899.4" height="122"/><rect x="909.9" y="140.3" width="897.9" height="122"/></g>
  <path d="M1,141.8H899M911,141.8H1807" stroke="#fdfdfd" stroke-width="1"/>
</svg>
<div id="hdr" class="abs"></div>
<svg class="abs" style="left:0;top:280px" width="1820" height="60" viewBox="0 280 1820 60"><path d="M0,289.4H1808M0,326.6H1808" stroke="#9b9b99" stroke-width="1.6"/><path d="M1444.2,291V325.5M1537,291V325.5M1657.4,291V325.5M1736,291V325.5" stroke="#bdbdbb" stroke-width="1.6"/></svg>
<svg class="abs" style="left:1506px;top:300px" width="20" height="14" viewBox="0 0 20 14"><path d="M1,12.3 L9.5,3.6 L18,12.3 Z" fill="#a3a3a3"/></svg>
<div id="list" class="abs"><div class="abs" style="left:0;top:-327px"><span class="t" style="left:30.0px;top:315.2px;font-size:20.52px;transform:scaleX(1.0695);color:#262626;">[nv_queue]</span>
<span class="t" style="left:1499.3px;top:315.2px;font-size:20.52px;transform:scaleX(1.0533);color:#262626;">0%</span>
<span class="t" style="left:1580.1px;top:315.2px;font-size:20.52px;transform:scaleX(1.0793);color:#262626;">0 bytes</span>
<span class="t" style="left:1665.0px;top:315.2px;font-size:20.52px;transform:scaleX(0.8694);color:#262626;">S</span>
<span class="t" style="left:1790.1px;top:315.2px;font-size:20.52px;transform:scaleX(1.0419);color:#262626;">0</span>
<span class="t" style="left:30.0px;top:349.5px;font-size:20.52px;transform:scaleX(1.0695);color:#262626;">[nv_queue]</span>
<span class="t" style="left:1499.3px;top:349.5px;font-size:20.52px;transform:scaleX(1.0533);color:#262626;">0%</span>
<span class="t" style="left:1580.1px;top:349.5px;font-size:20.52px;transform:scaleX(1.0793);color:#262626;">0 bytes</span>
<span class="t" style="left:1665.0px;top:349.5px;font-size:20.52px;transform:scaleX(0.8694);color:#262626;">S</span>
<span class="t" style="left:1790.1px;top:349.5px;font-size:20.52px;transform:scaleX(1.0419);color:#262626;">0</span>
<span class="t" style="left:30.0px;top:383.7px;font-size:20.52px;transform:scaleX(1.0879);color:#262626;">[nvidia-modeset/kthread_q]</span>
<span class="t" style="left:1499.3px;top:383.7px;font-size:20.52px;transform:scaleX(1.0533);color:#262626;">0%</span>
<span class="t" style="left:1580.1px;top:383.7px;font-size:20.52px;transform:scaleX(1.0793);color:#262626;">0 bytes</span>
<span class="t" style="left:1665.0px;top:383.7px;font-size:20.52px;transform:scaleX(0.8694);color:#262626;">S</span>
<span class="t" style="left:1790.1px;top:383.7px;font-size:20.52px;transform:scaleX(1.0419);color:#262626;">0</span>
<span class="t" style="left:30.0px;top:417.9px;font-size:20.52px;transform:scaleX(1.0706);color:#262626;">[nvidia-modeset/deferred_close_kthread_q]</span>
<span class="t" style="left:1499.3px;top:417.9px;font-size:20.52px;transform:scaleX(1.0533);color:#262626;">0%</span>
<span class="t" style="left:1580.1px;top:417.9px;font-size:20.52px;transform:scaleX(1.0793);color:#262626;">0 bytes</span>
<span class="t" style="left:1665.0px;top:417.9px;font-size:20.52px;transform:scaleX(0.8694);color:#262626;">S</span>
<span class="t" style="left:1790.1px;top:417.9px;font-size:20.52px;transform:scaleX(1.0419);color:#262626;">0</span>
<span class="t" style="left:30.0px;top:452.2px;font-size:20.52px;transform:scaleX(1.0708);color:#262626;">avahi-daemon: chroot helper</span>
<span class="t" style="left:1499.3px;top:452.2px;font-size:20.52px;transform:scaleX(1.0533);color:#262626;">0%</span>
<span class="t" style="left:1578.6px;top:452.2px;font-size:20.52px;transform:scaleX(1.0478);color:#262626;">1.4 MiB</span>
<span class="t" style="left:1665.0px;top:452.2px;font-size:20.52px;transform:scaleX(0.8694);color:#262626;">S</span>
<span class="t" style="left:1790.1px;top:452.2px;font-size:20.52px;transform:scaleX(1.0419);color:#262626;">0</span>
<span class="t" style="left:30.0px;top:486.4px;font-size:20.52px;transform:scaleX(1.0551);color:#262626;">/usr/sbin/cupsd -l</span>
<span class="t" style="left:1499.3px;top:486.4px;font-size:20.52px;transform:scaleX(1.0533);color:#262626;">0%</span>
<span class="t" style="left:1578.6px;top:486.4px;font-size:20.52px;transform:scaleX(1.0478);color:#262626;">8.8 MiB</span>
<span class="t" style="left:1665.0px;top:486.4px;font-size:20.52px;transform:scaleX(0.8694);color:#262626;">S</span>
<span class="t" style="left:1790.1px;top:486.4px;font-size:20.52px;transform:scaleX(1.0419);color:#262626;">0</span>
<span class="t" style="left:30.0px;top:520.7px;font-size:20.52px;transform:scaleX(1.0854);color:#262626;">/usr/sbin/lightdm</span>
<span class="t" style="left:1499.3px;top:520.7px;font-size:20.52px;transform:scaleX(1.0533);color:#262626;">0%</span>
<span class="t" style="left:1578.6px;top:520.7px;font-size:20.52px;transform:scaleX(1.0478);color:#262626;">8.9 MiB</span>
<span class="t" style="left:1665.0px;top:520.7px;font-size:20.52px;transform:scaleX(0.8694);color:#262626;">S</span>
<span class="t" style="left:1790.1px;top:520.7px;font-size:20.52px;transform:scaleX(1.0419);color:#262626;">0</span>
<span class="t" style="left:30.0px;top:554.9px;font-size:20.52px;transform:scaleX(1.0693);color:#262626;">(sd-pam)</span>
<span class="t" style="left:1499.3px;top:554.9px;font-size:20.52px;transform:scaleX(1.0533);color:#262626;">0%</span>
<span class="t" style="left:1578.6px;top:554.9px;font-size:20.52px;transform:scaleX(1.0478);color:#262626;">5.2 MiB</span>
<span class="t" style="left:1665.0px;top:554.9px;font-size:20.52px;transform:scaleX(0.8694);color:#262626;">S</span>
<span class="t" style="left:1790.1px;top:554.9px;font-size:20.52px;transform:scaleX(1.0419);color:#262626;">0</span>
<span class="t" style="left:30.0px;top:589.2px;font-size:20.52px;transform:scaleX(1.0659);color:#262626;">sshd: /usr/sbin/sshd -D [listener] 0 of 10-100 startups</span>
<span class="t" style="left:1499.3px;top:589.2px;font-size:20.52px;transform:scaleX(1.0533);color:#262626;">0%</span>
<span class="t" style="left:1578.6px;top:589.2px;font-size:20.52px;transform:scaleX(1.0478);color:#262626;">9.1 MiB</span>
<span class="t" style="left:1665.0px;top:589.2px;font-size:20.52px;transform:scaleX(0.8694);color:#262626;">S</span>
<span class="t" style="left:1790.1px;top:589.2px;font-size:20.52px;transform:scaleX(1.0419);color:#262626;">0</span>
<span class="t" style="left:30.0px;top:623.4px;font-size:20.52px;transform:scaleX(1.0785);color:#262626;">/sbin/agetty -o -p -- \u --noclear - linux</span>
<span class="t" style="left:1499.3px;top:623.4px;font-size:20.52px;transform:scaleX(1.0533);color:#262626;">0%</span>
<span class="t" style="left:1578.6px;top:623.4px;font-size:20.52px;transform:scaleX(1.0478);color:#262626;">2.0 MiB</span>
<span class="t" style="left:1665.0px;top:623.4px;font-size:20.52px;transform:scaleX(0.8694);color:#262626;">S</span>
<span class="t" style="left:1790.1px;top:623.4px;font-size:20.52px;transform:scaleX(1.0419);color:#262626;">0</span>
<span class="t" style="left:30.0px;top:657.6px;font-size:20.52px;transform:scaleX(1.0840);color:#262626;">/usr/bin/pipewire -c filter-chain.conf</span>
<span class="t" style="left:1499.3px;top:657.6px;font-size:20.52px;transform:scaleX(1.0533);color:#262626;">0%</span>
<span class="t" style="left:1578.6px;top:657.6px;font-size:20.52px;transform:scaleX(1.0478);color:#262626;">7.4 MiB</span>
<span class="t" style="left:1665.0px;top:657.6px;font-size:20.52px;transform:scaleX(0.8694);color:#262626;">S</span>
<span class="t" style="left:1790.1px;top:657.6px;font-size:20.52px;transform:scaleX(1.0419);color:#262626;">0</span>
<span class="t" style="left:30.0px;top:691.9px;font-size:20.52px;transform:scaleX(1.0725);color:#262626;">/usr/bin/pipewire-pulse</span>
<span class="t" style="left:1499.3px;top:691.9px;font-size:20.52px;transform:scaleX(1.0533);color:#262626;">0%</span>
<span class="t" style="left:1578.6px;top:691.9px;font-size:20.52px;transform:scaleX(1.0478);color:#262626;">8.6 MiB</span>
<span class="t" style="left:1665.0px;top:691.9px;font-size:20.52px;transform:scaleX(0.8694);color:#262626;">S</span>
<span class="t" style="left:1790.1px;top:691.9px;font-size:20.52px;transform:scaleX(1.0419);color:#262626;">0</span>
<span class="t" style="left:30.0px;top:726.1px;font-size:20.52px;transform:scaleX(1.0693);color:#262626;">(sd-pam)</span>
<span class="t" style="left:1499.3px;top:726.1px;font-size:20.52px;transform:scaleX(1.0533);color:#262626;">0%</span>
<span class="t" style="left:1578.6px;top:726.1px;font-size:20.52px;transform:scaleX(1.0478);color:#262626;">5.0 MiB</span>
<span class="t" style="left:1665.0px;top:726.1px;font-size:20.52px;transform:scaleX(0.8694);color:#262626;">S</span>
<span class="t" style="left:1790.1px;top:726.1px;font-size:20.52px;transform:scaleX(1.0419);color:#262626;">0</span>
<span class="t" style="left:30.0px;top:760.4px;font-size:20.52px;transform:scaleX(1.1440);color:#262626;">[nvidia]</span>
<span class="t" style="left:1499.3px;top:760.4px;font-size:20.52px;transform:scaleX(1.0533);color:#262626;">0%</span>
<span class="t" style="left:1580.1px;top:760.4px;font-size:20.52px;transform:scaleX(1.0793);color:#262626;">0 bytes</span>
<span class="t" style="left:1665.0px;top:760.4px;font-size:20.52px;transform:scaleX(0.8694);color:#262626;">S</span>
<span class="t" style="left:1790.1px;top:760.4px;font-size:20.52px;transform:scaleX(1.0419);color:#262626;">0</span>
<span class="t" style="left:30.0px;top:794.6px;font-size:20.52px;transform:scaleX(1.0638);color:#262626;">pipewire -c /run/user/1000/crd_audio#9Cbx0yT4qg/pipewire-pulse.conf</span>
<span class="t" style="left:1499.3px;top:794.6px;font-size:20.52px;transform:scaleX(1.0533);color:#262626;">0%</span>
<span class="t" style="left:1578.6px;top:794.6px;font-size:20.52px;transform:scaleX(1.0478);color:#262626;">9.8 MiB</span>
<span class="t" style="left:1665.0px;top:794.6px;font-size:20.52px;transform:scaleX(0.8694);color:#262626;">S</span>
<span class="t" style="left:1790.1px;top:794.6px;font-size:20.52px;transform:scaleX(1.0419);color:#262626;">0</span>
<span class="t" style="left:30.0px;top:828.9px;font-size:20.52px;transform:scaleX(1.0766);color:#262626;">lightdm --session-child 19 22</span>
<span class="t" style="left:1499.3px;top:828.9px;font-size:20.52px;transform:scaleX(1.0533);color:#262626;">0%</span>
<span class="t" style="left:1578.6px;top:828.9px;font-size:20.52px;transform:scaleX(1.0478);color:#262626;">7.8 MiB</span>
<span class="t" style="left:1665.0px;top:828.9px;font-size:20.52px;transform:scaleX(0.8694);color:#262626;">S</span>
<span class="t" style="left:1790.1px;top:828.9px;font-size:20.52px;transform:scaleX(1.0419);color:#262626;">0</span>
<span class="t" style="left:30.0px;top:863.1px;font-size:20.52px;transform:scaleX(1.0693);color:#262626;">(sd-pam)</span>
<span class="t" style="left:30.0px;top:897.3px;font-size:20.52px;transform:scaleX(1.0840);color:#262626;">/usr/bin/pipewire -c filter-chain.conf</span>
<span class="t" style="left:30.0px;top:931.6px;font-size:20.52px;transform:scaleX(1.0725);color:#262626;">/usr/bin/pipewire-pulse</span>
<span class="t" style="left:30.0px;top:965.8px;font-size:20.52px;transform:scaleX(1.0816);color:#262626;">/usr/bin/dbus-daemon --session --address=systemd: --nofork --nopidfile --systemd-activation --syslog-only</span>
<span class="t" style="left:30.0px;top:1000.1px;font-size:20.52px;transform:scaleX(1.0697);color:#262626;">/usr/libexec/at-spi-bus-launcher</span>
<span class="t" style="left:30.0px;top:1034.3px;font-size:20.52px;transform:scaleX(1.0787);color:#262626;">/usr/bin/dbus-daemon --config-file=/usr/share/defaults/at-spi2/accessibility.conf --nofork --print-address 11 --address=unix:path=/run</span>
<span class="t" style="left:30.0px;top:1068.6px;font-size:20.52px;transform:scaleX(1.0793);color:#262626;">/usr/libexec/gvfsd</span>
<span class="t" style="left:30.0px;top:1102.8px;font-size:20.52px;transform:scaleX(1.0766);color:#262626;">lightdm --session-child 15 22</span>
<span class="t" style="left:30.0px;top:1137.0px;font-size:20.52px;transform:scaleX(1.0725);color:#262626;">/usr/libexec/at-spi2-registryd --use-gnome-session</span>
<span class="t" style="left:30.0px;top:1171.3px;font-size:20.52px;transform:scaleX(1.0605);color:#262626;">[iprt-VBoxWQueue]</span>
<span class="t" style="left:30.0px;top:1205.5px;font-size:20.52px;transform:scaleX(1.0502);color:#262626;">[iprt-VBoxTscThread]</span>
<span class="t" style="left:30.0px;top:1239.8px;font-size:20.52px;transform:scaleX(1.0608);color:#262626;">[UVM deferred release queue]</span>
<span class="t" style="left:30.0px;top:1274.0px;font-size:20.52px;transform:scaleX(1.0884);color:#262626;">[dio/nvme0n1p2]</span>
<span class="t" style="left:30.0px;top:1308.3px;font-size:20.52px;transform:scaleX(1.0686);color:#262626;">/usr/sbin/docker-proxy -proto tcp -host-ip 0.0.0.0 -host-port 8080 -container-ip 172.24.0.4 -container-port 80</span>
<span class="t" style="left:30.0px;top:1342.5px;font-size:20.52px;transform:scaleX(1.0701);color:#262626;">/usr/sbin/docker-proxy -proto tcp -host-ip :: -host-port 8080 -container-ip 172.24.0.4 -container-port 80</span>
<span class="t" style="left:30.0px;top:1376.7px;font-size:20.52px;transform:scaleX(0.9830);color:#262626;">apache2 -DFOREGROUND</span>
<span class="t" style="left:30.0px;top:1411.0px;font-size:20.52px;transform:scaleX(0.9830);color:#262626;">apache2 -DFOREGROUND</span>
<span class="t" style="left:30.0px;top:1445.2px;font-size:20.52px;transform:scaleX(0.9830);color:#262626;">apache2 -DFOREGROUND</span>
<span class="t" style="left:30.0px;top:1479.5px;font-size:20.52px;transform:scaleX(0.9830);color:#262626;">apache2 -DFOREGROUND</span>
<span class="t" style="left:30.0px;top:1513.7px;font-size:20.52px;transform:scaleX(0.9830);color:#262626;">apache2 -DFOREGROUND</span>
<span class="t" style="left:30.0px;top:1548.0px;font-size:20.52px;transform:scaleX(1.0495);color:#262626;">/bin/sh -c ./Registry/Registry.Web --address 0.0.0.0:5000 /data</span>
<span class="t" style="left:30.0px;top:1582.2px;font-size:20.52px;transform:scaleX(1.0564);color:#262626;">/usr/bin/ssh-agent -s</span>
<span class="t" style="left:30.0px;top:1616.4px;font-size:20.52px;transform:scaleX(1.0634);color:#262626;">/usr/bin/gpg-agent --supervised</span></div></div>
<span class="t" style="left:23.0px;top:-7.1px;font-size:20.52px;transform:scaleX(0.9729);color:#3a3a3a;">Apps</span>
<span class="t" style="left:129.2px;top:-7.1px;font-size:20.52px;transform:scaleX(1.0283);color:#3a3a3a;">Task Manager</span>
<span class="t" style="left:426.8px;top:-7.1px;font-size:20.52px;transform:scaleX(1.0537);color:#3a3a3a;">Terminal - lupion@blk-s…</span>
<span class="t" style="left:1743.9px;top:-11.2px;font-size:16.43px;transform:scaleX(1.1069);color:#3a3a3a;">2023-10-03</span>
<span class="t" style="left:1768.1px;top:5.0px;font-size:16.43px;transform:scaleX(1.0849);color:#3a3a3a;">13:47</span>
<span class="t" style="left:1855.0px;top:-6.9px;font-size:20.52px;transform:scaleX(1.0773);color:#3a3a3a;">lupion</span>
<span class="t" style="left:783.4px;top:39.6px;font-size:18.47px;transform:scaleX(1.1388);color:#2b2b2b;font-weight:700;">Task Manager</span>
<span class="t" style="left:157.4px;top:260.9px;font-size:20.52px;transform:scaleX(1.0099);color:#ee8a3c;">CPU: 11%</span>
<span class="t" style="left:590.9px;top:260.9px;font-size:20.52px;transform:scaleX(1.0204);color:#3a3a3a;">Processes: 403</span>
<span class="t" style="left:968.2px;top:260.9px;font-size:20.52px;transform:scaleX(1.0465);color:#c0507e;">Memory: 16% (10.2 GiB / 62.7 GiB)</span>
<span class="t" style="left:1434.6px;top:260.9px;font-size:20.52px;transform:scaleX(1.0348);color:#7c4a5a;">Swap: 0% (256.0 KiB / 512.0 GiB)</span>
<span class="t" style="left:8.9px;top:292.6px;font-size:20.52px;transform:scaleX(1.0696);color:#a3a3a3;font-weight:700;">Task</span>
<span class="t" style="left:1455.0px;top:292.6px;font-size:20.52px;transform:scaleX(1.0132);color:#a3a3a3;font-weight:700;">CPU</span>
<span class="t" style="left:1547.0px;top:292.6px;font-size:20.52px;transform:scaleX(0.9576);color:#a3a3a3;font-weight:700;">RSS</span>
<span class="t" style="left:1667.6px;top:292.6px;font-size:20.52px;transform:scaleX(1.1600);color:#a3a3a3;font-weight:700;">State</span>
<span class="t" style="left:1746.7px;top:292.6px;font-size:20.52px;transform:scaleX(1.1401);color:#a3a3a3;font-weight:700;">Prio.</span>
<svg class="abs" style="left:0;top:30px" width="1820" height="110" viewBox="0 30 1820 110">
  <!-- window icon -->
  <rect x="3.5" y="40" width="25.5" height="24" fill="#15283f"/>
  <path d="M10.2,45 L11.6,44.5 L14.8,58.2 L18.6,48.2 L21.5,46.8 L25,51.5" fill="none" stroke="#2f9fc0" stroke-width="1.5" stroke-linejoin="round" stroke-linecap="round"/><path d="M10,46 L10.6,56" stroke="#1f5d7c" stroke-width="1"/>
  <!-- window buttons -->
  <g fill="none" stroke="#2d2d27" stroke-width="3.1">
    <path d="M1684,57 L1690,50.2 L1696,57" stroke-linecap="round" stroke-linejoin="miter"/>
    <path d="M1717.7,57.5 H1731"/>
    <rect x="1753.5" y="47.6" width="10" height="10"/>
    <path d="M1787.5,47.5 L1798,58 M1798,47.5 L1787.5,58" stroke-linecap="round"/>
  </g>
  <!-- tools icon: wrench + screwdriver crossed -->
  <g>
    <!-- wrench shaft -->
    <path d="M31,101 L42.5,112" stroke="#2b2b2b" stroke-width="3.3"/>
    <!-- wrench heads -->
    <circle cx="29.6" cy="99.2" r="4.9" fill="#2b2b2b"/>
    <path d="M30.3,97.4 L25.7,92.8 L23.2,95.3 L27.8,99.9 Z" fill="#fcfcfa"/>
    <circle cx="44.2" cy="112.4" r="4.9" fill="#2b2b2b"/>
    <path d="M43.5,114.2 L48.1,118.8 L50.6,116.3 L46,111.7 Z" fill="#fcfcfa"/>
    <!-- screwdriver: white halo then parts -->
    <path d="M26,115.6 L46,96.4" stroke="#fcfcfa" stroke-width="5.4" stroke-linecap="round"/>
    <path d="M26.6,115 L35.6,106.6" stroke="#2b2b2b" stroke-width="4" stroke-linecap="round"/>
    <path d="M35,107.2 L45.2,97.2" stroke="#2b2b2b" stroke-width="1.7"/>
    <circle cx="45.9" cy="96.4" r="2.3" fill="#2b2b2b"/>
  </g>
  <!-- cross of 4 rects -->
  <g fill="#fff" stroke="#2b2b2b" stroke-width="1.5">
    <rect x="98.6" y="94.4" width="4.9" height="7.4"/>
    <rect x="98.6" y="109.2" width="4.9" height="7.4"/>
    <rect x="89.8" y="103.2" width="7.4" height="4.7"/>
    <rect x="104.9" y="103.2" width="7.4" height="4.7"/>
  </g>
  <!-- search icon -->
  <circle cx="1008.3" cy="104.6" r="8.4" fill="none" stroke="#484848" stroke-width="2.5"/>
  <path d="M1014.5,110.8 L1021.3,117.4" stroke="#484848" stroke-width="2.7" stroke-linecap="round"/>
  <!-- broom -->
  <path d="M1764.6,95.5 L1771.8,105.6" stroke="#b27a22" stroke-width="5" stroke-linecap="round"/>
  <path d="M1765.6,96 L1771,103.8" stroke="#d9a648" stroke-width="1.6" stroke-linecap="round"/>
  <path d="M1768.5,106.5 L1775.5,102.2 L1787.6,108 L1788,110.5 L1776.5,118.8 L1773.5,118.4 Z" fill="#e4d534" stroke="#b9a92a" stroke-width="1.2" stroke-linejoin="round"/>
  <path d="M1767.6,105.8 L1775.2,101.2" stroke="#c88f2e" stroke-width="2.6" stroke-linecap="round"/>
</svg>


<!-- ===== terminal ===== -->
<div id="term" class="abs"></div>
<div id="tscreen" class="abs"><pre>Every 2.0s: nvidia-smi                                  blk-server: Tue Oct  3 13:47:03 2023

Tue Oct  3 13:47:03 2023
+---------------------------------------------------------------------------------------+
| NVIDIA-SMI 535.113.01             Driver Version: 535.113.01   CUDA Version: 12.2     |
|-----------------------------------------+----------------------+----------------------+
| GPU  Name                 Persistence-M | Bus-Id        Disp.A | Volatile Uncorr. ECC |
| Fan  Temp   Perf          Pwr:Usage/Cap |         Memory-Usage | GPU-Util  Compute M. |
|                                         |                      |               MIG M. |
|=========================================+======================+======================|
|   0  NVIDIA GeForce RTX 2080 Ti     Off | 00000000:01:00.0  On |                  N/A |
| 39%   52C    P2             239W / 260W |    658MiB / 11264MiB |     97%      Default |
|                                         |                      |                  N/A |
+-----------------------------------------+----------------------+----------------------+

+---------------------------------------------------------------------------------------+
| Processes:                                                                            |
|  GPU   GI   CI        PID   Type   Process name                            GPU Memory |
|        ID   ID                                                             Usage      |
|=======================================================================================|
|    0   N/A  N/A      1021      G   /usr/lib/xorg/Xorg                          113MiB |
|    0   N/A  N/A     43827      C   python3                                     346MiB |
|    0   N/A  N/A     65419      C   ...stall/bin/OpenMVS/DensifyPointCloud      192MiB |
+---------------------------------------------------------------------------------------+</pre></div>
<span class="t" style="left:1531.4px;top:871.9px;font-size:18.47px;transform:scaleX(1.1504);color:#a0a0a0;font-weight:700;">Terminal - lupion@blk-server: ~</span>
<svg class="abs" style="left:1112px;top:869px" width="34" height="31" viewBox="0 0 34 31">
  <rect x="1.5" y="2" width="29.5" height="26.2" fill="#a9b3bc"/>
  <rect x="3.6" y="4" width="25.2" height="22.2" fill="#24313c"/>
  <path d="M6.8,8.6 L12.8,12.4 L6.8,16.2" fill="none" stroke="#e6eef6" stroke-width="2"/>
  <rect x="14.6" y="18.8" width="8" height="2.4" fill="#e6eef6"/>
</svg>

<div class="abs" style="left:1900px;top:805px;width:70px;height:70px;border-radius:35px;background:rgba(40,40,40,.55)"></div>
<svg class="abs" style="left:1908px;top:830px" width="12" height="24" viewBox="0 0 12 24"><path d="M12,7.5 L7.6,12 L12,16.5 Z" fill="#8fd1b0"/></svg>
</body></html>
